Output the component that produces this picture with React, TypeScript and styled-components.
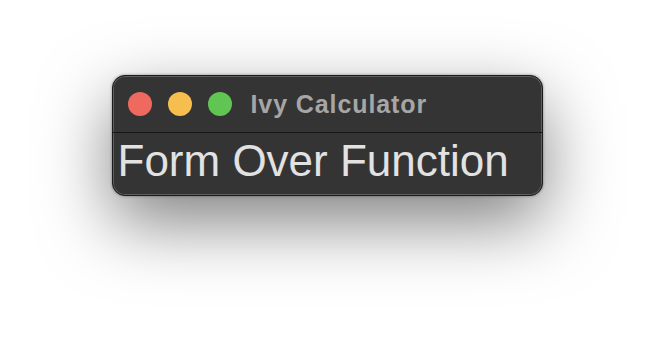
import React from 'react'
import styled, { createGlobalStyle } from 'styled-components'

const GlobalStyle = createGlobalStyle`
  html, body {
    margin: 0;
    padding: 0;
    background: #ffffff;
  }
  body {
    font-family: "Liberation Sans", Arial, sans-serif;
  }
`

const Page = styled.div`
  width: 654px;
  height: 344px;
  display: flex;
  justify-content: center;
  align-items: flex-start;
  padding-top: 75px;
  box-sizing: border-box;
`

const Window = styled.div`
  width: 431px;
  height: 121px;
  box-sizing: border-box;
  background: #343434;
  border-radius: 13px;
  border: 1px solid #1c1c1c;
  box-shadow: inset 0 0 0 1px #5e5e5e, 0 26px 70px rgba(0, 0, 0, 0.5),
    0 0 3px rgba(0, 0, 0, 0.4);
  overflow: hidden;
  display: flex;
  flex-direction: column;
`

const TitleBar = styled.div`
  height: 56px;
  flex: none;
  display: flex;
  align-items: center;
  padding-left: 15px;
  border-bottom: 1px solid #161616;
`

const Light = styled.span<{ $color: string }>`
  width: 24px;
  height: 24px;
  border-radius: 50%;
  background: ${(p) => p.$color};
  margin-right: 16px;
  flex: none;
`

const Title = styled.div`
  margin-left: 3px;
  font-size: 25px;
  font-weight: bold;
  color: #a6a6a6;
  letter-spacing: 0.9px;
`

const Content = styled.div`
  flex: 1;
  padding-left: 5px;
  font-size: 44px;
  line-height: 56px;
  color: #e2e2e2;
  white-space: nowrap;
`

export default function App() {
  return (
    <>
      <GlobalStyle />
      <Page>
        <Window>
          <TitleBar>
            <Light $color="#ee6a5f" />
            <Light $color="#f5be4f" />
            <Light $color="#61c554" />
            <Title>Ivy Calculator</Title>
          </TitleBar>
          <Content>Form Over Function</Content>
        </Window>
      </Page>
    </>
  )
}
